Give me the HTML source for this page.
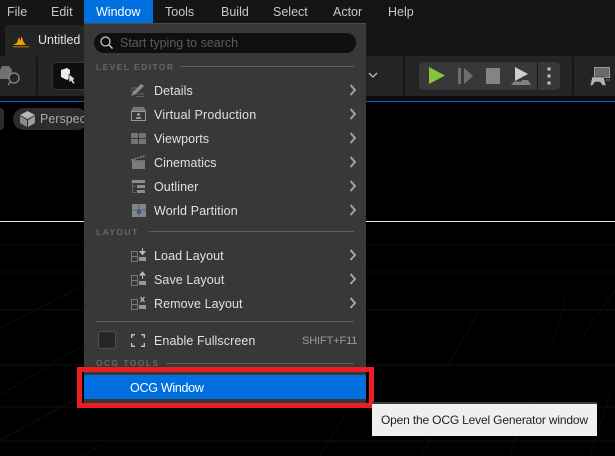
<!DOCTYPE html>
<html><head><meta charset="utf-8"><style>
html,body{margin:0;padding:0;background:#000}
#r{position:relative;width:615px;height:456px;overflow:hidden;background:#000;font-family:"Liberation Sans",sans-serif;font-size:12.5px;color:#d8d8d8}
#r div{position:absolute}
.t{white-space:nowrap;line-height:16px;height:16px}
.m{color:#c8c8c8;top:4px}
.i{color:#e0e0e0;left:154px;letter-spacing:.08px}
.h{font-size:8.5px;font-weight:bold;letter-spacing:1.4px;color:#666;line-height:10px;left:96px}
.l{height:1px;background:#5e5e5e}
svg{position:absolute;overflow:visible}
</style></head><body><div id="r">
<svg style="left:0;top:0" width="615" height="456" fill="none" stroke-width="1">
<path stroke="#101010" d="M0 310H615M0 365H615M0 407H615M0 441H615"/>
<path stroke="#0b0b0b" d="M0 245H615M0 272H615"/>
<path stroke="#0d0d0d" d="M0 328L84 285M0 395L84 345M0 440L84 395M84 456L100 445M420 456L450 410M445 370L480 310M510 456L530 400M552 345L565 300M590 456L610 395M320 456L345 415M615 290L580 340"/>
</svg>
<div style="left:0;top:0;width:615px;height:56px;background:#151515"></div>
<div style="left:5px;top:25px;width:90px;height:31px;background:#242424;border-radius:4px 4px 0 0"></div>
<svg style="left:13px;top:34px" width="17" height="14"><path d="M0 11L4 9L6 3L7.500 7L8.500 2L10.500 8L13 11Z" fill="#f5a000"/><rect x="0" y="12" width="16" height="1.500" fill="#8a5a10"/></svg>
<div class="t" style="left:38px;top:32px;color:#e2e2e2">Untitled</div>
<div class="t m" style="left:7px">File</div>
<div class="t m" style="left:51px">Edit</div>
<div style="left:84px;top:0;width:69px;height:23px;background:#0070e0"></div>
<div class="t" style="left:96px;top:4px;color:#fff">Window</div>
<div class="t m" style="left:165px">Tools</div>
<div class="t m" style="left:221px">Build</div>
<div class="t m" style="left:273px">Select</div>
<div class="t m" style="left:333px">Actor</div>
<div class="t m" style="left:388px">Help</div>

<div style="left:0;top:56px;width:615px;height:40px;background:#242424"></div>
<div style="left:0;top:96px;width:615px;height:5px;background:#0c0c0c"></div>
<div style="left:0;top:101px;width:615px;height:1px;background:#0062c4"></div>
<div style="left:36px;top:57px;width:2px;height:38px;background:#151515"></div>
<div style="left:52px;top:62px;width:40px;height:28px;background:#0e0e0e;border-radius:4px;border:1px solid #333;box-sizing:border-box"></div>
<svg style="left:0;top:64px" width="22" height="24"><path d="M0 6L2 2H9L12 6V15H0Z" fill="#707070"/><circle cx="14" cy="14" r="5" stroke="#8a8a8a" stroke-width="1.300" fill="#242424"/><path d="M10.500 18L8 21" stroke="#8a8a8a" stroke-width="1.300"/></svg>
<svg style="left:60px;top:67px" width="16" height="17"><path d="M1 3L7 1L10 3V11L7 13L1 10Z" fill="#eee"/><path d="M9 7L9 16L11 14L13 17L15 16L13 13L15 12Z" fill="#ddd" stroke="#111" stroke-width=".6"/></svg>
<svg style="left:368px;top:72px" width="11" height="7" fill="none"><path d="M1 1L5 5L9 1" stroke="#b8b8b8" stroke-width="1.300"/></svg>
<div style="left:403px;top:57px;width:2px;height:38px;background:#151515"></div>
<div style="left:572px;top:57px;width:2px;height:38px;background:#151515"></div>
<div style="left:419px;top:62px;width:141px;height:28px;background:#383838;border-radius:5px"></div>
<div style="left:537px;top:62px;width:1px;height:28px;background:#151515"></div>
<svg style="left:419px;top:62px" width="190" height="30">
<path d="M10 5V22L26 13.500Z" fill="#86c440"/>
<rect x="39" y="6" width="3" height="16" fill="#6f6f6f"/><path d="M45 6V22L54 14Z" fill="#6f6f6f"/>
<rect x="67" y="6" width="14" height="16" fill="#848484"/>
<path d="M96 5V19L109 12Z" fill="#cfcfcf"/><path d="M103 18L109 18L112 23H92L95 19.500H103Z" fill="#808080"/>
<circle cx="130" cy="7" r="1.700" fill="#bdbdbd"/><circle cx="130" cy="14" r="1.700" fill="#bdbdbd"/><circle cx="130" cy="21" r="1.700" fill="#bdbdbd"/>
<rect x="175.500" y="5.500" width="15" height="10" fill="#6a6a6a" stroke="#999" stroke-width="1"/>
<path d="M171 24L173 15H185L187 24L183 23L181 20H176L174 23Z" fill="#b4b4b4" stroke="#222" stroke-width=".6"/>
<path d="M187 18H191" stroke="#777" stroke-width="1"/>
</svg>
<div style="left:0;top:108px;width:4px;height:22px;background:#2c2c2c;border-radius:0 10px 10px 0"></div>
<div style="left:13px;top:108px;width:75px;height:22px;background:#2c2c2c;border-radius:11px"></div>
<svg style="left:19px;top:110px" width="17" height="18"><path d="M8.500 1L16 5L8.500 9L1 5Z" fill="#b8b8b8"/><path d="M1 6L8 10V17L1 13Z" fill="#8a8a8a"/><path d="M16 6L9 10V17L16 13Z" fill="#9c9c9c"/></svg>
<div class="t" style="left:40px;top:111px;color:#a8a8a8">Perspective</div>
<div style="left:0;top:221px;width:615px;height:1px;background:#e8e8e8"></div>

<!-- menu -->
<div style="left:84px;top:23px;width:282px;height:380px;background:#383838;border-top:1px solid #4c4c4c;box-sizing:border-box"></div>
<div style="left:94px;top:33px;width:262px;height:20px;background:#0f0f0f;border-radius:10px"></div>
<svg style="left:100px;top:36px" width="14" height="14" fill="none"><circle cx="5.500" cy="5.500" r="4.500" stroke="#d0d0d0" stroke-width="1.200"/><path d="M9 9L12.500 12.500" stroke="#d0d0d0" stroke-width="1.400"/></svg>
<div class="t" style="left:120px;top:35px;color:#5c5c5c">Start typing to search</div>

<div class="h" style="top:62px">LEVEL EDITOR</div>
<div class="l" style="left:180px;top:66px;width:174px"></div>

<svg style="left:130px;top:83px" width="16" height="14" fill="none"><path d="M1 13L3 9L11 1L14 3L6 11Z" fill="#8c8c8c"/><path d="M1 5H7M1 8H4M8 11H14M6 13.500H14" stroke="#666"/></svg>
<div class="t i" style="top:83px">Details</div>
<svg style="left:131px;top:107px" width="15" height="14"><path d="M2 0H13L15 4H0Z" fill="#777"/><rect x=".5" y="4.500" width="14" height="9" fill="none" stroke="#999"/><circle cx="7.500" cy="7.500" r="1.500" fill="#999"/><path d="M4.500 12L5.500 10H9.500L10.500 12Z" fill="#999"/></svg>
<div class="t i" style="top:107px;letter-spacing:.22px">Virtual Production</div>
<svg style="left:131px;top:133px" width="15" height="11"><path d="M0 0H7V5H0ZM8 0H15V5H8ZM0 6H7V11H0ZM8 6H15V11H8Z" fill="#747474"/></svg>
<div class="t i" style="top:131px;letter-spacing:.05px">Viewports</div>
<svg style="left:131px;top:155px" width="15" height="14" fill="none"><path d="M0 5L14 1" stroke="#858585" stroke-dasharray="2 1" stroke-width="1.500"/><rect x="1" y="7" width="13" height="7" fill="#7c7c7c"/><path d="M1 6H14" stroke="#aaa"/></svg>
<div class="t i" style="top:155px">Cinematics</div>
<svg style="left:132px;top:180px" width="14" height="13"><path d="M0 0H13V3H0ZM5 5H13V8H5ZM5 10H13V13H5Z" fill="#8c8c8c"/><path d="M.5 3V12.500H4M.5 6.500H4" fill="none" stroke="#606060"/></svg>
<div class="t i" style="top:179px">Outliner</div>
<svg style="left:132px;top:204px" width="14" height="13"><rect width="14" height="13" fill="#858585"/><path d="M7 0V13M0 6H14" stroke="#5c5c5c"/><rect x="5" y="6" width="4" height="4" fill="#2c5e9c"/></svg>
<div class="t i" style="top:203px;letter-spacing:.14px">World Partition</div>

<div class="h" style="top:227px">LAYOUT</div>
<div class="l" style="left:149px;top:231px;width:205px"></div>

<svg style="left:131px;top:248px" width="15" height="14" fill="none"><path d="M.5 3.500H7M.5 3.500V13.500H7M.5 8.500H7M6.500 3.500V13.500" stroke="#777"/><rect x="8" y="9" width="7" height="4" fill="#999"/><path d="M11.500 0V5M9 3.500L11.500 6.500L14 3.500Z" fill="#bbb" stroke="#bbb"/></svg>
<div class="t i" style="top:248px;left:154px">Load Layout</div>
<svg style="left:131px;top:272px" width="15" height="14" fill="none"><path d="M.5 3.500H7M.5 3.500V13.500H7M.5 8.500H7M6.500 3.500V13.500" stroke="#777"/><rect x="8" y="9" width="7" height="4" fill="#999"/><path d="M11.500 7V2M9 3L11.500 0L14 3Z" fill="#bbb" stroke="#bbb"/></svg>
<div class="t i" style="top:272px;left:154px">Save Layout</div>
<svg style="left:131px;top:296px" width="15" height="14" fill="none"><path d="M.5 3.500H7M.5 3.500V13.500H7M.5 8.500H7M6.500 3.500V13.500" stroke="#777"/><rect x="8" y="9" width="7" height="4" fill="#999"/><path d="M9.500 1L13.500 6M13.500 1L9.500 6" stroke="#bbb" stroke-width="1.300"/></svg>
<div class="t i" style="top:296px;left:154px">Remove Layout</div>

<svg style="left:349px;top:84px" width="8" height="230" fill="none" stroke="#a4a4a4" stroke-width="2"><path d="M1.500 1L6 6L1.500 11M1.500 25L6 30L1.500 35M1.500 49L6 54L1.500 59M1.500 73L6 78L1.500 83M1.500 97L6 102L1.500 107M1.500 121L6 126L1.500 131M1.500 166L6 171L1.500 176M1.500 190L6 195L1.500 200M1.500 214L6 219L1.500 224"/></svg>

<div class="l" style="left:96px;top:321px;width:258px"></div>
<div style="left:98px;top:331px;width:18px;height:18px;box-sizing:border-box;background:#262626;border:1px solid #4e4e4e;border-radius:3px"></div>
<svg style="left:131px;top:334px" width="14" height="13" fill="none" stroke="#c4c4c4" stroke-width="1.300"><path d="M.7 4V.7H4M10 .7H13.300V4M.7 9V12.300H4M10 12.300H13.300V9"/></svg>
<div class="t i" style="top:333px">Enable Fullscreen</div>
<div class="t" style="left:302px;top:333px;color:#9a9a9a;font-size:11px;letter-spacing:-.12px">SHIFT+F11</div>

<div class="h" style="top:358px">OCG TOOLS</div>
<div class="l" style="left:166px;top:363px;width:188px"></div>

<div style="left:84px;top:375px;width:282px;height:24px;background:#0070e0"></div>
<div class="t" style="left:130px;top:380px;color:#fff;letter-spacing:-.28px">OCG Window</div>
<div style="left:77px;top:367px;width:297px;height:41px;box-sizing:border-box;border:5px solid #ee1c25"></div>

<div style="left:372px;top:402px;width:225px;height:2px;background:#3c3c3c"></div>
<div class="t" style="left:372px;top:404px;width:225px;height:32px;line-height:32px;background:#efefef;color:#222;box-sizing:border-box;padding-left:9px;font-size:12px;letter-spacing:-.17px">Open the OCG Level Generator window</div>
</div></body></html>
